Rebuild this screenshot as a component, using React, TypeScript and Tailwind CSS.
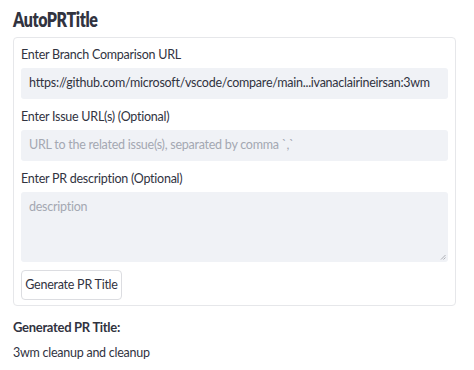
export default function App() {
  return (
    <div className="w-[474px] h-[370px] bg-white text-[#31333f] px-[13px] pt-[7px]" style={{ fontFamily: "Lato, 'Noto Sans', sans-serif" }}>
      <h1 className="h-[30px]">
        <span className="inline-block origin-left scale-x-[0.8] text-[20px] font-extrabold tracking-[-0.5px] leading-[24px]">AutoPRTitle</span>
      </h1>
      <div className="w-[443px] h-[269px] border border-[#e6e7ea] rounded-[4px] px-[7px] pt-[8px] text-[12.5px] tracking-[-0.25px]">
        <label className="block leading-[18px] h-[22px]">Enter Branch Comparison URL</label>
        <div className="h-[31px] bg-[#f0f2f6] rounded-[3px] px-[8px] flex items-center whitespace-nowrap overflow-hidden">
          https://github.com/microsoft/vscode/compare/main...ivanaclairineirsan:3wm
        </div>
        <label className="block leading-[18px] h-[31px] pt-[9px]">Enter Issue URL(s) (Optional)</label>
        <div className="h-[31px] bg-[#f0f2f6] rounded-[3px] px-[8px] flex items-center text-[#a4a8b2] whitespace-nowrap overflow-hidden">
          URL to the related issue(s), separated by comma `,`
        </div>
        <label className="block leading-[18px] h-[31px] pt-[9px]">Enter PR description (Optional)</label>
        <div className="relative h-[70px] bg-[#f0f2f6] rounded-[3px] px-[8px] pt-[6px] text-[#a4a8b2]">
          description
          <svg className="absolute right-[2px] bottom-[2px]" width="6" height="6" viewBox="0 0 6 6">
            <path d="M5.5 1 L1 5.5 M5.5 3.5 L3.5 5.5" stroke="#9a9ca3" strokeWidth="0.8" />
          </svg>
        </div>
        <button className="mt-[8px] h-[30px] w-[101px] border border-[#dcdde1] rounded-[4px] bg-white text-[#31333f]">
          Generate PR Title
        </button>
      </div>
      <div className="mt-[12px] text-[13px] tracking-[-0.3px] font-bold leading-[18px]">Generated PR Title:</div>
      <div className="mt-[8px] text-[12.5px] tracking-[-0.25px] leading-[18px]">3wm cleanup and cleanup</div>
    </div>
  );
}
